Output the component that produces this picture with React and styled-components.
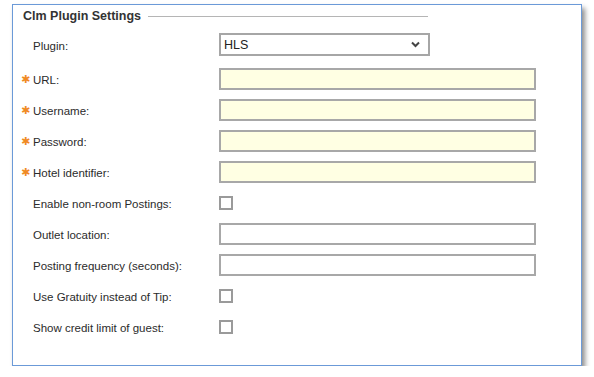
import React from 'react';
import styled, { createGlobalStyle } from 'styled-components';

const GlobalStyle = createGlobalStyle`
    html, body {
        margin: 0;
        padding: 0;
        background: #fff;
    }
    body {
        font-family: "Liberation Sans", Arial, sans-serif;
        font-size: 11.5px;
        color: #2b2b2b;
    }
`;

const fields = [
    { label: 'URL:', type: 'text', required: true },
    { label: 'Username:', type: 'text', required: true },
    { label: 'Password:', type: 'text', required: true },
    { label: 'Hotel identifier:', type: 'text', required: true },
    { label: 'Enable non-room Postings:', type: 'check' },
    { label: 'Outlet location:', type: 'text' },
    { label: 'Posting frequency (seconds):', type: 'text' },
    { label: 'Use Gratuity instead of Tip:', type: 'check' },
    { label: 'Show credit limit of guest:', type: 'check' },
];

export default function App() {
    return (
        <Page>
            <GlobalStyle />
            <Panel>
                <Legend>
                    <Title>Clm Plugin Settings</Title>
                    <Rule />
                </Legend>
                <Form>
                    <Row $first>
                        <Marker />
                        <Label>Plugin:</Label>
                        <Select>
                            <span>HLS</span>
                            <svg width="9" height="7" viewBox="0 0 9 7">
                                <polyline points="1,1.5 4.5,5 8,1.5" fill="none" stroke="#444" strokeWidth="2" />
                            </svg>
                        </Select>
                    </Row>
                    {fields.map((f) => (
                        <Row key={f.label}>
                            <Marker>{f.required && '✱'}</Marker>
                            <Label>{f.label}</Label>
                            {f.type === 'check' ? (
                                <Check type="checkbox" />
                            ) : (
                                <TextBox type="text" $required={f.required} />
                            )}
                        </Row>
                    ))}
                </Form>
            </Panel>
        </Page>
    );
}

const Page = styled.div`
    padding: 4px 0 0 12px;
`;

const Panel = styled.div`
    box-sizing: border-box;
    width: 570px;
    height: 362px;
    border: 1px solid #6b9ad8;
    background: #fff;
    box-shadow: 3px 4px 5px rgba(0, 0, 0, 0.45);
`;

const Legend = styled.div`
    display: flex;
    align-items: center;
    height: 21px;
    padding-left: 10px;
`;

const Title = styled.div`
    font-weight: 700;
    font-size: 12.5px;
    color: #333;
`;

const Rule = styled.div`
    width: 280px;
    height: 1px;
    margin-left: 7px;
    margin-top: 2px;
    background: #b5b5b5;
`;

const Form = styled.div`
    padding: 3px 0 0 8px;
`;

const Row = styled.div`
    display: flex;
    align-items: center;
    height: 31px;
    margin-bottom: ${(p) => (p.$first ? '3px' : '0')};
`;

const Marker = styled.div`
    width: 12px;
    padding-top: 1px;
    font-family: "DejaVu Sans", sans-serif;
    font-size: 11px;
    font-weight: 700;
    color: #f08a24;
`;

const Label = styled.div`
    width: 186px;
    padding-top: 2px;
    color: #2b2b2b;
    white-space: nowrap;
`;

const Select = styled.div`
    box-sizing: border-box;
    width: 211px;
    height: 23px;
    border: 2px solid #a6a6a6;
    display: flex;
    align-items: center;
    justify-content: space-between;
    padding: 0 8px 0 3px;
    font-size: 12.5px;
    color: #222;
`;

const TextBox = styled.input`
    box-sizing: border-box;
    width: 317px;
    height: 22px;
    margin: 0;
    border: 2px solid #a8a8a8;
    background: ${(p) => (p.$required ? '#ffffe3' : '#fff')};
    outline: none;
`;

const Check = styled.input`
    appearance: none;
    box-sizing: border-box;
    width: 14px;
    height: 14px;
    margin: 0;
    border: 2px solid #9a9a9a;
    background: #fff;
`;
